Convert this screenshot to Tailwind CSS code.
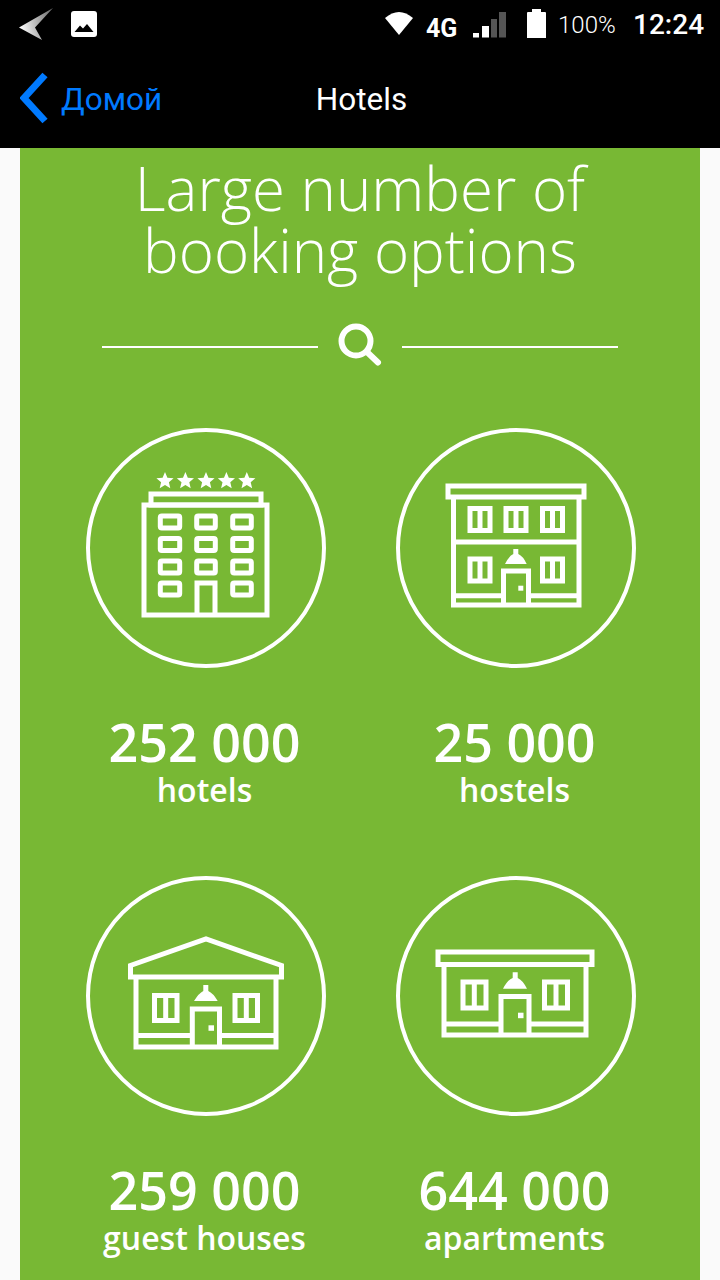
<!DOCTYPE html>
<html lang="en">
<head>
    <meta charset="UTF-8">
    <meta name="viewport" content="width=device-width, initial-scale=1.0">
    <title>Hotels</title>
    <script src="https://cdn.jsdelivr.net/npm/@tailwindcss/browser@4"></script>
</head>
<body class="bg-[#fafafa] h-[1280px] w-[720px] overflow-hidden font-['Open_Sans',sans-serif]">
    <!-- Status bar + nav -->
    <header class="bg-black h-[148px] text-white font-['Roboto',sans-serif]">
        <div class="flex items-center h-[48px] relative">
            <svg class="w-[720px] h-[48px]" viewBox="0 0 720 48">
                <defs>
                    <linearGradient id="nav-arrow" x1="0" y1="0.5" x2="1" y2="0.3">
                        <stop offset="0" stop-color="#ffffff"/>
                        <stop offset="1" stop-color="#6e6e6e"/>
                    </linearGradient>
                </defs>
                <path d="M19 27.5 L53 8 L35 27.5 L42 40 Z" fill="url(#nav-arrow)"/>
                <rect x="71" y="11" width="26" height="26" rx="3" fill="#fff"/>
                <path d="M74.5 32 L80 25.5 L83 28.5 L87 24 L93.5 32 Z" fill="#000"/>
                <path d="M385 18 Q399 6 413 18 L399 35 Z" fill="#fff"/>
                <rect x="473" y="33" width="6" height="4.5" fill="#fff"/>
                <rect x="482" y="26" width="7" height="11.5" fill="#fff"/>
                <rect x="491" y="19" width="6" height="18.5" fill="#555"/>
                <rect x="499" y="12" width="7" height="25.5" fill="#555"/>
                <path d="M527 13 Q527 12 528 12 H532 V9 H541 V12 H545 Q546 12 546 13 V38 H527 Z" fill="#fff"/>
            </svg>
            <span class="absolute left-[426px] top-[15px] text-[25px] leading-[28px] font-bold">4G</span>
            <span class="absolute left-[558px] top-[11px] text-[24px] leading-[28px] font-light">100%</span>
            <span class="absolute left-[633px] top-[10px] text-[28px] leading-[30px] font-medium">12:24</span>
        </div>
        <nav class="grid grid-cols-[1fr_auto_1fr] items-center h-[100px]">
            <div class="flex items-center pl-[20px] gap-[12px]">
                <svg class="w-[29px] h-[52px]" viewBox="0 0 29 52" fill="none">
                    <path d="M25 3 L4 26 L25 49" stroke="#007aff" stroke-width="7"/>
                </svg>
                <span class="text-[#007aff] text-[31.5px] leading-[40px] pt-[3px]">Домой</span>
            </div>
            <span class="text-[31.5px] leading-[40px] pl-[3px] pt-[3px]">Hotels</span>
            <div></div>
        </nav>
    </header>

    <!-- Green panel -->
    <main class="bg-[#78b834] mx-[20px] h-[1132px] text-white pt-[9px]">
        <h1 class="text-[60px] leading-[62px] font-light text-center">Large number of<br>booking options</h1>

        <div class="flex items-center justify-center mt-[41px] h-[50px]">
            <div class="w-[216px] h-[2px] bg-white"></div>
            <svg class="w-[84px] h-[50px]" viewBox="318 322 84 50" fill="none" stroke="#fff" stroke-width="6">
                <circle cx="356" cy="341" r="14.5"/>
                <path d="M367 352 L378 362.5" stroke-linecap="round"/>
            </svg>
            <div class="w-[216px] h-[2px] bg-white"></div>
        </div>

        <div class="grid grid-cols-[310px_310px] justify-center mt-[56px] pl-[1px]">
            <!-- hotels -->
            <div class="flex flex-col items-center h-[448px]">
                <svg class="w-[240px] h-[240px]" viewBox="86 428 240 240" fill="none" stroke="#fff" stroke-width="5">
                    <defs>
                        <path id="star" d="M0 -9 L2.4 -3.3 L8.6 -2.8 L3.9 1.25 L5.3 7.3 L0 4.1 L-5.3 7.3 L-3.9 1.25 L-8.6 -2.8 L-2.4 -3.3 Z"/>
                    </defs>
                    <circle cx="206" cy="548" r="118" stroke-width="4"/>
                    <rect x="144" y="505" width="123" height="110"/>
                    <rect x="151" y="494" width="110" height="11"/>
                    <rect x="160.3" y="516" width="19.4" height="12" rx="1.5"/>
                    <rect x="196.7" y="516" width="18.6" height="12" rx="1.5"/>
                    <rect x="232.7" y="516" width="18.6" height="12" rx="1.5"/>
                    <rect x="160.3" y="538.5" width="19.4" height="12" rx="1.5"/>
                    <rect x="196.7" y="538.5" width="18.6" height="12" rx="1.5"/>
                    <rect x="232.7" y="538.5" width="18.6" height="12" rx="1.5"/>
                    <rect x="160.3" y="561" width="19.4" height="12" rx="1.5"/>
                    <rect x="196.7" y="561" width="18.6" height="12" rx="1.5"/>
                    <rect x="232.7" y="561" width="18.6" height="12" rx="1.5"/>
                    <rect x="160.3" y="583" width="19.4" height="12" rx="1.5"/>
                    <rect x="232.7" y="583" width="18.6" height="12" rx="1.5"/>
                    <path d="M197 615 V583 H215 V615"/>
                    <g fill="#fff" stroke="none">
                        <use href="#star" x="165" y="481"/>
                        <use href="#star" x="185.4" y="481"/>
                        <use href="#star" x="206" y="481"/>
                        <use href="#star" x="226.4" y="481"/>
                        <use href="#star" x="246.8" y="481"/>
                    </g>
                </svg>
                <div class="mt-[46px] mr-[2px] text-[52px] leading-[56px] font-semibold">252 000</div>
                <div class="mt-[2px] mr-[2px] text-[32px] leading-[36px] font-semibold">hotels</div>
            </div>

            <!-- hostels -->
            <div class="flex flex-col items-center h-[448px]">
                <svg class="w-[240px] h-[240px]" viewBox="396 428 240 240" fill="none" stroke="#fff" stroke-width="5">
                    <circle cx="516" cy="548" r="118" stroke-width="4"/>
                    <rect x="448" y="486" width="136" height="11"/>
                    <path d="M453.5 497 V605 H579 V497 M453.5 542 H579 M453.5 595.7 H503 M529 595.7 H579"/>
                    <rect x="470" y="508.5" width="20" height="22"/>
                    <path d="M480 508.5 V530.5"/>
                    <rect x="506" y="508.5" width="20" height="22"/>
                    <path d="M516 508.5 V530.5"/>
                    <rect x="542.5" y="508.5" width="20" height="22"/>
                    <path d="M552.5 508.5 V530.5"/>
                    <rect x="470" y="559" width="20" height="22"/>
                    <path d="M480 559 V581"/>
                    <rect x="542.5" y="559" width="20" height="22"/>
                    <path d="M552.5 559 V581"/>
                    <path d="M503.5 605 V571 H528.5 V605"/>
                    <g fill="#fff" stroke="none">
                        <path d="M513.3 549 H518.3 V554 Q523 556 526.7 564 H505 Q509 556 513.3 554 Z"/>
                        <rect x="518.3" y="585.7" width="5" height="5"/>
                    </g>
                </svg>
                <div class="mt-[46px] mr-[2px] text-[52px] leading-[56px] font-semibold">25 000</div>
                <div class="mt-[2px] mr-[2px] text-[32px] leading-[36px] font-semibold">hostels</div>
            </div>

            <!-- guest houses -->
            <div class="flex flex-col items-center h-[448px]">
                <svg class="w-[240px] h-[240px]" viewBox="86 876 240 240" fill="none" stroke="#fff" stroke-width="5">
                    <circle cx="206" cy="996" r="118" stroke-width="4"/>
                    <path d="M130.5 977 V965.5 L206 939 L281.5 965.5 V977 Z"/>
                    <path d="M136 977 V1047 H276 V977 M136 1035.5 H190 M221 1035.5 H276"/>
                    <rect x="154.5" y="995.5" width="22.5" height="25"/>
                    <path d="M165.7 995.5 V1020.5"/>
                    <rect x="235" y="995.5" width="22.5" height="25"/>
                    <path d="M246.3 995.5 V1020.5"/>
                    <path d="M192.3 1047 V1009 H219.5 V1047"/>
                    <g fill="#fff" stroke="none">
                        <path d="M203.3 985 H208.3 V991 Q213 993 217.7 1001 H194 Q199 993 203.3 991 Z"/>
                        <rect x="208.5" y="1025.3" width="5.5" height="5.5"/>
                    </g>
                </svg>
                <div class="mt-[46px] mr-[2px] text-[52px] leading-[56px] font-semibold">259 000</div>
                <div class="mt-[2px] mr-[2px] text-[32px] leading-[36px] font-semibold">guest houses</div>
            </div>

            <!-- apartments -->
            <div class="flex flex-col items-center h-[448px]">
                <svg class="w-[240px] h-[240px]" viewBox="396 876 240 240" fill="none" stroke="#fff" stroke-width="5">
                    <circle cx="516" cy="996" r="118" stroke-width="4"/>
                    <rect x="438" y="952" width="154" height="12.5"/>
                    <path d="M444 964.5 V1035 H586 V964.5 M444 1024 H501 M529 1024 H586"/>
                    <rect x="463" y="982" width="23" height="26"/>
                    <path d="M474.3 982 V1008"/>
                    <rect x="544.5" y="982" width="23" height="26"/>
                    <path d="M556 982 V1008"/>
                    <path d="M501 1035 V996.5 H529 V1035"/>
                    <g fill="#fff" stroke="none">
                        <path d="M512.7 972.3 H517.7 V978 Q522.5 980 527 988.7 H503 Q507.5 980 512.7 978 Z"/>
                        <rect x="518" y="1012.7" width="5.5" height="5.5"/>
                    </g>
                </svg>
                <div class="mt-[46px] mr-[2px] text-[52px] leading-[56px] font-semibold">644 000</div>
                <div class="mt-[2px] mr-[2px] text-[32px] leading-[36px] font-semibold">apartments</div>
            </div>
        </div>
    </main>
</body>
</html>
